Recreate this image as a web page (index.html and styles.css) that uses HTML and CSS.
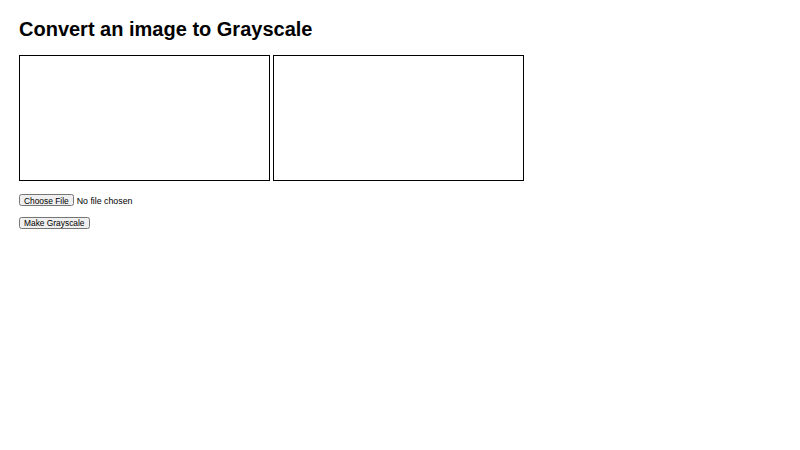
FILE: index.html
```html
<!DOCTYPE html>
<html>
<head>
<meta charset="utf-8">
<link rel="stylesheet" href="styles.css">
</head>
<body>
<div class="page">
  <h1 class="title">Convert an image to Grayscale</h1>
  <div class="canvases">
    <canvas class="view" width="250" height="124"></canvas>
    <canvas class="view" width="250" height="124"></canvas>
  </div>
  <div class="row"><input type="file" class="file"></div>
  <div class="row"><button class="btn">Make Grayscale</button></div>
</div>
</body>
</html>
```
FILE: styles.css
```css
html, body { margin: 0; padding: 0; background: #fff; }
.page {
  padding: 0 19px;
  font-family: "Liberation Sans", Arial, sans-serif;
  display: flex;
  flex-direction: column;
  align-items: flex-start;
}
.title {
  font-size: 20px;
  font-weight: bold;
  margin: 18px 0 14px;
  line-height: 23px;
}
.canvases { display: flex; gap: 3px; }
.view { display: block; width: 249px; height: 124px; border: 1px solid #000; }
.row { margin-top: 13px; display: flex; }
.row + .row { margin-top: 11px; }
.file { font-family: "Liberation Sans", Arial, sans-serif; font-size: 8.8px; height: 12px; padding: 0; line-height: 12px; }
.file::file-selector-button, .btn {
  font-family: "Liberation Sans", Arial, sans-serif;
  font-size: 8.4px;
  height: 12px;
  padding: 0 3px 1px;
  line-height: 9px;
}
.file::file-selector-button { margin-right: 3px; }
```
